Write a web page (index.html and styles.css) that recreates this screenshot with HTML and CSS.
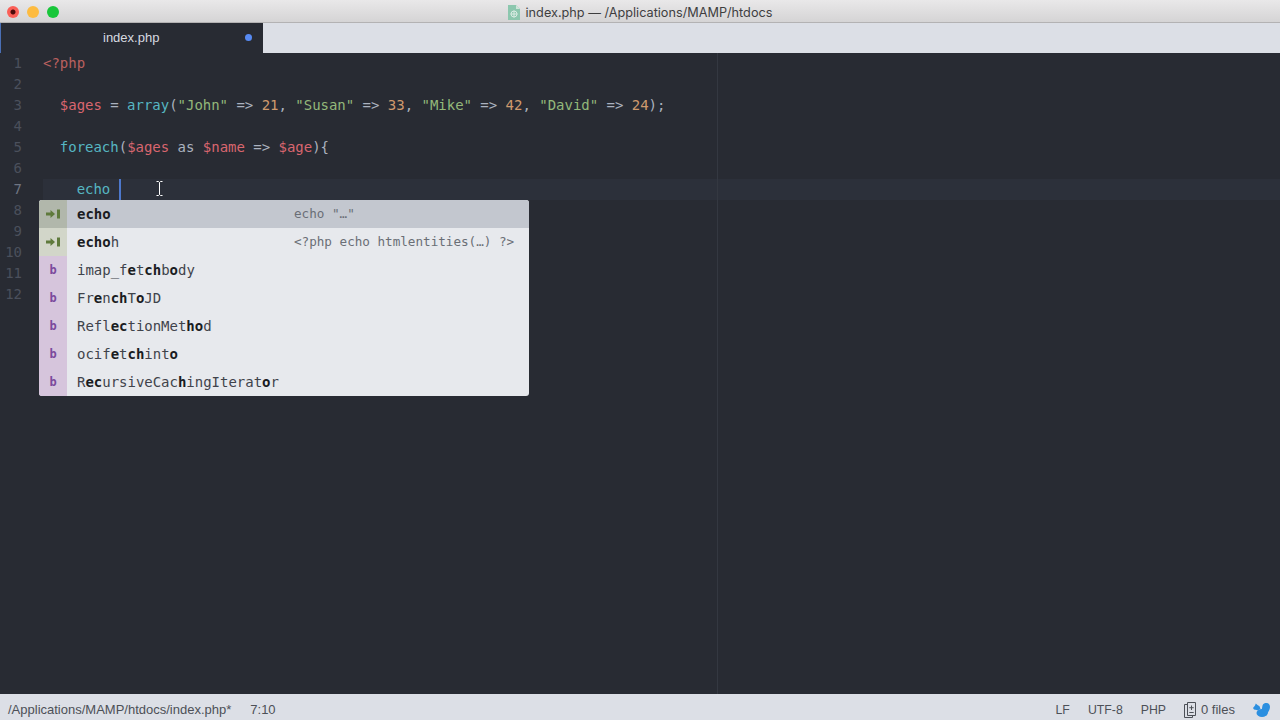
FILE: index.html
```html
<!DOCTYPE html>
<html lang="en">
<head>
    <meta charset="UTF-8">
    <title>index.php</title>
    <link rel="stylesheet" href="styles.css">
</head>
<body>

<div class="titlebar">
    <div class="lights">
        <span class="light red"></span>
        <span class="light yellow"></span>
        <span class="light green"></span>
    </div>
    <div class="title">
        <svg class="file-icon" width="12" height="15" viewBox="0 0 12 15">
            <path d="M0 0H8L12 4V15H0Z" fill="#8cc7ae"/>
            <path d="M8 0L12 4H8Z" fill="#cfe5da"/>
            <circle cx="6" cy="9" r="3" fill="none" stroke="#d9ebe3" stroke-width="1"/>
            <path d="M2.5 9H9.5M6 5.5V12.5" stroke="#d9ebe3" stroke-width="1"/>
        </svg>
        <span>index.php — /Applications/MAMP/htdocs</span>
    </div>
</div>

<div class="tabbar">
    <div class="tab">
        <span class="tab-name">index.php</span>
        <span class="tab-dot"></span>
    </div>
</div>

<div class="editor">
    <div class="gutter">
        <div>1</div><div>2</div><div>3</div><div>4</div><div>5</div><div>6</div>
        <div class="now">7</div>
        <div>8</div><div>9</div><div>10</div><div>11</div><div>12</div>
    </div>
    <div class="code">
        <div class="line"><span class="red-c">&lt;?php</span></div>
        <div class="line"></div>
        <div class="line">  <span class="var">$ages</span> = <span class="fn">array</span>(<span class="str">"John"</span> =&gt; <span class="num">21</span>, <span class="str">"Susan"</span> =&gt; <span class="num">33</span>, <span class="str">"Mike"</span> =&gt; <span class="num">42</span>, <span class="str">"David"</span> =&gt; <span class="num">24</span>);</div>
        <div class="line"></div>
        <div class="line">  <span class="fn">foreach</span>(<span class="var">$ages</span> as <span class="var">$name</span> =&gt; <span class="var">$age</span>){</div>
        <div class="line"></div>
        <div class="line current">    <span class="fn">echo</span> <span class="caret"></span></div>
        <div class="line"></div>
        <div class="line"></div>
        <div class="line"></div>
        <div class="line"></div>
        <div class="line"></div>
    </div>
    <div class="wrap-guide"></div>

    <svg class="ibeam" width="7" height="15" viewBox="0 0 7 15">
        <path d="M0.5 0.5H2.5L3.5 1.5L4.5 0.5H6.5M3.5 1.5V13.5M0.5 14.5H2.5L3.5 13.5L4.5 14.5H6.5" fill="none" stroke="#fff" stroke-width="1"/>
    </svg>

    <ul class="popup">
        <li class="row selected">
            <span class="kind snip"><svg width="16" height="10" viewBox="0 0 16 10"><path d="M1 3.5H5.5V1L10 5L5.5 9V6.5H1ZM12 0.5H15V9.5H12Z" fill="#5f7a3c"/></svg></span>
            <span class="word"><b>echo</b></span>
            <span class="hint">echo "…"</span>
        </li>
        <li class="row">
            <span class="kind snip"><svg width="16" height="10" viewBox="0 0 16 10"><path d="M1 3.5H5.5V1L10 5L5.5 9V6.5H1ZM12 0.5H15V9.5H12Z" fill="#5f7a3c"/></svg></span>
            <span class="word"><b>echo</b>h</span>
            <span class="hint">&lt;?php echo htmlentities(…) ?&gt;</span>
        </li>
        <li class="row">
            <span class="kind func">b</span>
            <span class="word">imap_f<b>e</b>t<b>ch</b>b<b>o</b>dy</span>
        </li>
        <li class="row">
            <span class="kind func">b</span>
            <span class="word">Fr<b>e</b>n<b>ch</b>T<b>o</b>JD</span>
        </li>
        <li class="row">
            <span class="kind func">b</span>
            <span class="word">Refl<b>ec</b>tionMet<b>ho</b>d</span>
        </li>
        <li class="row">
            <span class="kind func">b</span>
            <span class="word">ocif<b>e</b>t<b>ch</b>int<b>o</b></span>
        </li>
        <li class="row">
            <span class="kind func">b</span>
            <span class="word">R<b>ec</b>ursiveCac<b>h</b>ingIterat<b>o</b>r</span>
        </li>
    </ul>
</div>

<div class="statusbar">
    <div class="status-left">
        <span>/Applications/MAMP/htdocs/index.php*</span>
        <span>7:10</span>
    </div>
    <div class="status-right">
        <span class="status-item">LF</span>
        <span class="status-item">UTF-8</span>
        <span class="status-item">PHP</span>
        <span class="files">
            <svg width="12" height="16" viewBox="0 0 12 16">
                <path d="M3.5 2.5H0.5V15.5H8.5V13.5M3.5 0.5H11.5V13.5H3.5Z" fill="none" stroke="#4c5057" stroke-width="1"/>
                <path d="M7.5 3.5V8M5.3 5.7H9.7M5.3 10.5H9.7" fill="none" stroke="#4c5057" stroke-width="1"/>
            </svg>
            0 files
        </span>
        <svg class="squirrel" width="17" height="14" viewBox="0 0 17 14">
            <path d="M0 5L2 2.5L2.8 0.5L4.5 2L6.5 3.2L7.5 6L5 7.2L1 6.5Z" fill="#2b8fe0"/>
            <ellipse cx="9" cy="10" rx="5.5" ry="4" fill="#2b8fe0"/>
            <path d="M8.5 8L9.5 2.5C10 0.5 12 0 13.5 0C15.8 0 17 2 17 4C17 7 15 8.5 14.5 11L13 13Z" fill="#2b8fe0"/>
        </svg>
    </div>
</div>

</body>
</html>
```

FILE: styles.css
```css
* {
    margin: 0;
    padding: 0;
    box-sizing: border-box;
    list-style: none;
}

body {
    display: flex;
    flex-direction: column;
    height: 720px;
    overflow: hidden;
    background: #282b33;
    font-family: "Liberation Sans", Arial, sans-serif;
}

.titlebar {
    position: relative;
    display: flex;
    align-items: center;
    justify-content: center;
    flex: none;
    height: 23px;
    padding-top: 2px;
    background: linear-gradient(#e9e8e9, #d5d4d5);
    border-bottom: 1px solid #b3b2b3;
    font-family: Inter, "Liberation Sans", sans-serif;
    font-size: 12.7px;
    color: #3e3e3f;
}

.lights {
    position: absolute;
    top: 6px;
    left: 7px;
    display: flex;
    gap: 8px;
}

.light {
    width: 12px;
    height: 12px;
    border-radius: 50%;
}
.light.red {
    background: radial-gradient(circle, #4d0b0a 0 2px, #fb5f57 3px);
}
.light.yellow {
    background: #fdbb40;
}
.light.green {
    background: #18c63a;
}

.title {
    display: flex;
    align-items: center;
    gap: 6px;
}

.tabbar {
    display: flex;
    flex: none;
    height: 30px;
    background: #dcdfe6;
}

.tab {
    display: flex;
    align-items: center;
    justify-content: space-between;
    width: 263px;
    padding: 0 11px 2px 102px;
    background: #282b33;
    border-left: 1px solid #4a6fb5;
    font-size: 13px;
    color: #d7dae0;
}

.tab-dot {
    width: 7px;
    height: 7px;
    border-radius: 50%;
    background: #578af2;
}

.editor {
    position: relative;
    display: flex;
    flex: 1;
    background: #282b33;
    font-family: "DejaVu Sans Mono", monospace;
    font-size: 14px;
    line-height: 21px;
    letter-spacing: -0.02px;
    color: #abb2bf;
}

.gutter {
    flex: none;
    width: 43px;
    padding-right: 21px;
    text-align: right;
    color: #4b505c;
}
.gutter .now {
    color: #6f7582;
}

.code {
    flex: 1;
}

.line {
    height: 21px;
    white-space: pre;
}
.line.current {
    background: #2c303a;
}

.red-c { color: #b9605f; }
.var { color: #d9666f; }
.fn { color: #56b6c2; }
.str { color: #93b87a; }
.num { color: #cf9a6e; }

.caret {
    display: inline-block;
    width: 2px;
    height: 21px;
    vertical-align: top;
    background: #4d78cc;
}

.wrap-guide {
    position: absolute;
    top: 0;
    bottom: 0;
    left: 717px;
    width: 1px;
    background: #343841;
}

.ibeam {
    position: absolute;
    top: 128px;
    left: 156px;
}

.popup {
    position: absolute;
    top: 147px;
    left: 39px;
    width: 490px;
    background: #e7e9ed;
    border-radius: 3px;
    overflow: hidden;
    color: #3f434b;
}

.row {
    display: flex;
    align-items: center;
    height: 28px;
}
.row.selected {
    background: #c3c7cf;
}

.kind {
    display: flex;
    align-items: center;
    justify-content: center;
    flex: none;
    width: 28px;
    height: 100%;
    margin-right: 10px;
    font-size: 12px;
    font-weight: bold;
}
.kind.snip {
    background: #d2d6c9;
}
.row.selected .kind.snip {
    background: #b1b7ab;
}
.kind.func {
    background: #d6c5dc;
    color: #7b4a9c;
}

.word {
    width: 217px;
    flex: none;
}
.word b {
    color: #1a1c22;
}

.hint {
    margin-bottom: 2px;
    font-size: 12.65px;
    color: #6a6e76;
}

.statusbar {
    display: flex;
    align-items: center;
    justify-content: space-between;
    flex: none;
    height: 26px;
    padding: 5px 10px 0 8px;
    background: #dcdfe6;
    font-size: 13px;
    color: #4c5057;
}

.status-left {
    display: flex;
    gap: 19px;
}

.status-right {
    display: flex;
    align-items: center;
    gap: 18px;
}

.status-item {
    font-size: 12.3px;
}

.files {
    display: flex;
    align-items: center;
    gap: 5px;
}
```
